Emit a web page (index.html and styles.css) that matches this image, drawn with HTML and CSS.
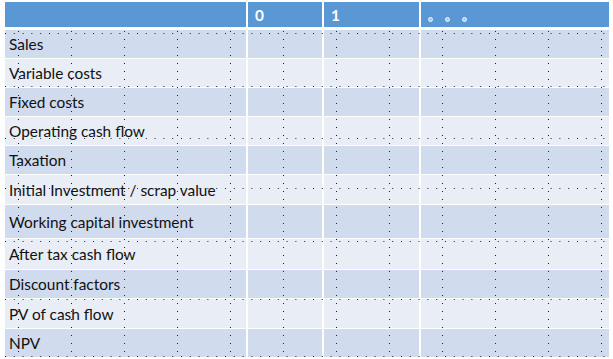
FILE: index.html
```html
<!DOCTYPE html>
<html>
<head>
<meta charset="utf-8">
<link rel="stylesheet" href="styles.css">
</head>
<body>
<div class="page">
  <div class="table">
    <div class="hd"></div>
    <div class="hd">0</div>
    <div class="hd">1</div>
    <div class="hd dots"><span class="o"></span><span class="o"></span><span class="o"></span></div>

    <div class="c dk lbl">Sales</div><div class="c dk"></div><div class="c dk"></div><div class="c dk"></div>
    <div class="c lt lbl">Variable costs</div><div class="c lt"></div><div class="c lt"></div><div class="c lt"></div>
    <div class="c dk lbl">Fixed costs</div><div class="c dk"></div><div class="c dk"></div><div class="c dk"></div>
    <div class="c lt lbl">Operating cash flow</div><div class="c lt"></div><div class="c lt"></div><div class="c lt"></div>
    <div class="c dk lbl">Taxation</div><div class="c dk"></div><div class="c dk"></div><div class="c dk"></div>
    <div class="c lt lbl">Initial Investment / scrap value</div><div class="c lt"></div><div class="c lt"></div><div class="c lt"></div>
    <div class="c dk lbl">Working capital investment</div><div class="c dk"></div><div class="c dk"></div><div class="c dk"></div>
    <div class="c lt lbl">After tax cash flow</div><div class="c lt"></div><div class="c lt"></div><div class="c lt"></div>
    <div class="c dk lbl">Discount factors</div><div class="c dk"></div><div class="c dk"></div><div class="c dk"></div>
    <div class="c lt lbl">PV of cash flow</div><div class="c lt"></div><div class="c lt"></div><div class="c lt"></div>
    <div class="c dk lbl">NPV</div><div class="c dk"></div><div class="c dk"></div><div class="c dk"></div>
  </div>

  <svg class="grid" width="613" height="359" viewBox="0 0 613 359" shape-rendering="crispEdges">
    <defs>
      <pattern id="vdots" x="71" y="31" width="53" height="8" patternUnits="userSpaceOnUse">
        <rect x="0" y="0" width="1" height="1" fill="#1e1e28"/>
      </pattern>
      <pattern id="hdots" x="5" y="0" width="8.8" height="359" patternUnits="userSpaceOnUse">
        <rect x="0" y="0" width="1" height="359" fill="#1e1e28"/>
      </pattern>
    </defs>
    <rect x="5" y="29" width="604" height="329" fill="url(#vdots)"/>
    <rect x="5" y="33" width="604" height="1" fill="url(#hdots)"/>
    <rect x="5" y="86" width="604" height="1" fill="url(#hdots)"/>
    <rect x="5" y="138" width="604" height="1" fill="url(#hdots)"/>
    <rect x="5" y="188" width="604" height="1" fill="url(#hdots)"/>
    <rect x="5" y="241" width="604" height="1" fill="url(#hdots)"/>
    <rect x="5" y="299" width="604" height="1" fill="url(#hdots)"/>
    <rect x="5" y="356" width="604" height="1" fill="url(#hdots)"/>
  </svg>
</div>
</body>
</html>
```

FILE: styles.css
```css
html, body {
  margin: 0;
  padding: 0;
  background: #ffffff;
}

.page {
  position: relative;
  width: 613px;
  height: 359px;
  padding: 2px 0 0 5px;
  box-sizing: border-box;
}

.table {
  display: grid;
  width: 604px;
  grid-template-columns: 241px 74px 95px 188px;
  grid-template-rows: 27px 28px 28px 28px 28px 28px 29px 33px 30px 28px 29px 28px;
  column-gap: 2px;
  row-gap: 1px;
  background: #ffffff;
  font-family: Lato, "Open Sans", sans-serif;
  font-size: 15.4px;
}

.hd {
  background: #5a97d5;
  background-clip: padding-box;
  border-bottom: 2px solid #ffffff;
  color: #ffffff;
  font-weight: 700;
  display: flex;
  align-items: center;
  padding-left: 7px;
}

.dots {
  align-items: flex-end;
  padding-left: 7px;
  padding-bottom: 5px;
  gap: 12px;
}

.o {
  display: inline-block;
  width: 5px;
  height: 5px;
  box-sizing: border-box;
  border-radius: 50%;
  border: 1.5px solid #f4f8fc;
  background: #a9c8ea;
}

.c {
  display: flex;
  align-items: center;
}

.dk { background: #d0dbee; }
.lt { background: #e9eef6; }

.lbl {
  padding-left: 4px;
  color: #111111;
}

.grid {
  position: absolute;
  left: 0;
  top: 0;
  pointer-events: none;
}
```
